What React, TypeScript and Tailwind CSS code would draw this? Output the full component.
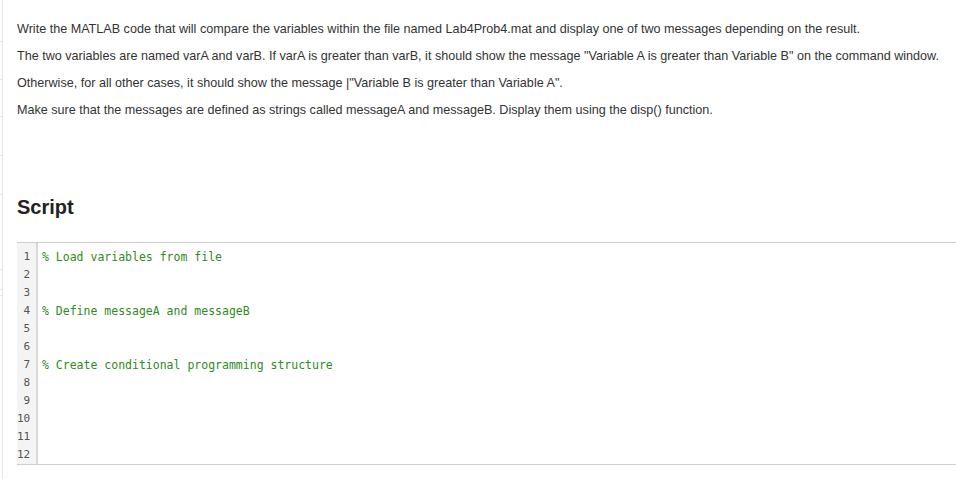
import React from "react";

const codeLines: string[] = [
  "% Load variables from file",
  "",
  "",
  "% Define messageA and messageB",
  "",
  "",
  "% Create conditional programming structure",
  "",
  "",
  "",
  "",
  "",
];

const paragraphs = [
  "Write the MATLAB code that will compare the variables within the file named Lab4Prob4.mat and display one of two messages depending on the result.",
  'The two variables are named varA and varB. If varA is greater than varB, it should show the message "Variable A is greater than Variable B" on the command window.',
  'Otherwise, for all other cases, it should show the message |"Variable B is greater than Variable A".',
  "Make sure that the messages are defined as strings called messageA and messageB. Display them using the disp() function.",
];

const stripSegments = [42, 38, 37, 39, 39, 75, 20, 6];

export default function App() {
  return (
    <div className="flex w-[956px] h-[479px] bg-white overflow-hidden" style={{ fontFamily: '"Liberation Sans", Arial, sans-serif' }}>
      {/* left panel edge */}
      <div className="w-[3px] shrink-0 border-r border-[#e3e3e3] flex flex-col">
        {stripSegments.map((h, i) => (
          <div key={i} className="border-b border-[#e6e6e6]" style={{ height: h }} />
        ))}
      </div>

      <div className="flex-1 pl-[14px] pt-[16px]">
        <div className="flex flex-col text-[12.6px] leading-[27px] text-[#333]">
          {paragraphs.map((p, i) => (
            <p key={i} className="whitespace-nowrap">{p}</p>
          ))}
        </div>

        <h2 className="mt-[71px] text-[20px] leading-[24px] font-bold text-[#222]">Script</h2>

        <div className="mt-[23px] border-t border-b border-[#cfcfcf] flex bg-white">
          <div className="w-[21px] shrink-0 bg-[#f4f4f4] border-r-2 border-[#d8d8d8] pt-[5px]">
            {codeLines.map((_, i) => (
              <div key={i} className="h-[18px] leading-[18px] text-right pr-[6px] text-[11px] text-[#555]" style={{ fontFamily: '"DejaVu Sans Mono", monospace' }}>
                {i + 1}
              </div>
            ))}
          </div>
          <div className="flex-1 pt-[5px] pl-[4px]">
            {codeLines.map((l, i) => (
              <div key={i} className="h-[18px] leading-[18px] text-[11.5px] text-[#2e8b22] whitespace-pre" style={{ fontFamily: '"DejaVu Sans Mono", monospace' }}>
                {l}
              </div>
            ))}
          </div>
        </div>
      </div>
    </div>
  );
}
